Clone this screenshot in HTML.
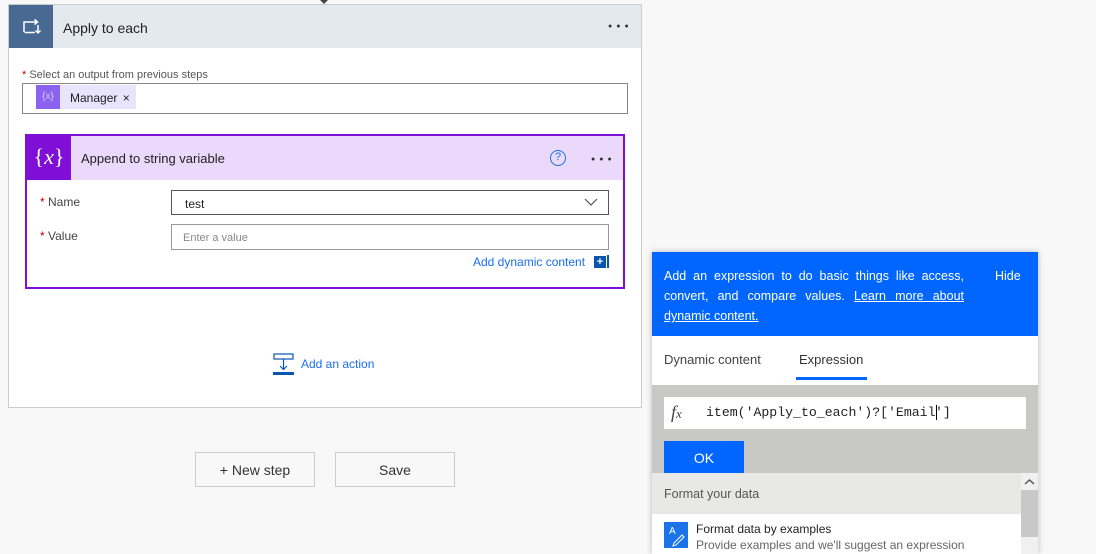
<!DOCTYPE html>
<html><head><meta charset="utf-8"><style>
*{box-sizing:border-box;margin:0;padding:0}
body{width:1096px;height:554px;overflow:hidden;background:#f8f8f8;font-family:"Liberation Sans",sans-serif;position:relative;color:#333}
.a{position:absolute}
.dots{font-size:7px;letter-spacing:4px;color:#333}
</style></head><body>
<div class="a" style="left:320px;top:0;width:8px;height:4px;background:#444;clip-path:polygon(0 0,100% 0,50% 100%)"></div>
<div class="a" style="left:8px;top:4px;width:634px;height:404px;background:#fff;border:1px solid #ccc"></div>
<div class="a" style="left:9px;top:5px;width:632px;height:43px;background:#e4e8ef"></div>
<div class="a" style="left:9px;top:5px;width:44px;height:43px;background:#486991">
<svg width="44" height="43" viewBox="0 0 44 43"><g fill="none" stroke="#fff" stroke-width="1.5"><path d="M15 27V17h13"/><path d="M25.5 14.5l3 2.5-3 2.5"/><path d="M15.5 27.5H26"/><path d="M29 20v8"/><path d="M26.5 25.5l2.5 2.5 2.5-2.5"/></g></svg></div>
<div class="a" style="left:63px;top:20px;font-size:14px;color:#222">Apply to each</div>
<div class="a dots" style="left:608px;top:23px">●●●</div>
<div class="a" style="left:22px;top:69px;font-size:11px;color:#555"><span style="color:#c00">*</span> Select an output from previous steps</div>
<div class="a" style="left:22px;top:83px;width:606px;height:31px;border:1px solid #888;background:#fff"></div>
<div class="a" style="left:36px;top:85px;width:100px;height:24px;background:#e8e4fc"></div>
<div class="a" style="left:36px;top:85px;width:24px;height:24px;background:#8b62f0;color:#d8ccff;font-size:10px;text-align:center;line-height:24px">{x}</div>
<div class="a" style="left:70px;top:91px;font-size:12px;color:#222">Manager <span style="margin-left:2px">×</span></div>
<div class="a" style="left:25px;top:134px;width:600px;height:155px;border:2px solid #7f0fd6;background:#fff"></div>
<div class="a" style="left:27px;top:136px;width:596px;height:44px;background:#ead9fa"></div>
<div class="a" style="left:27px;top:136px;width:44px;height:44px;background:#7f0fd6;color:#fff;font-size:22px;text-align:center;line-height:42px;font-family:'Liberation Serif',serif">{<i>x</i>}</div>
<div class="a" style="left:81px;top:151px;font-size:13px;color:#222">Append to string variable</div>
<div class="a" style="left:550px;top:150px;width:16px;height:16px;border:1.5px solid #1a73e8;border-radius:50%;color:#1a73e8;font-size:11px;text-align:center;line-height:13px">?</div>
<div class="a dots" style="left:591px;top:156px">●●●</div>
<div class="a" style="left:40px;top:195px;font-size:12px;color:#444"><span style="color:#c00">*</span> Name</div>
<div class="a" style="left:40px;top:229px;font-size:12px;color:#444"><span style="color:#c00">*</span> Value</div>
<div class="a" style="left:171px;top:190px;width:438px;height:25px;border:1px solid #555;background:#fff;font-size:12px;padding:6px 0 0 13px;color:#222">test</div>
<svg class="a" style="left:584px;top:197px" width="14" height="10"><path d="M1 2l6 6 6-6" fill="none" stroke="#555" stroke-width="1.2"/></svg>
<div class="a" style="left:171px;top:224px;width:438px;height:26px;border:1px solid #999;background:#fff;font-size:11px;padding:7px 0 0 11px;color:#888">Enter a value</div>
<div class="a" style="left:473px;top:255px;font-size:12px;color:#1a6ef0">Add dynamic content</div>
<div class="a" style="left:594px;top:256px;width:12px;height:12px;background:#0a55b0;color:#fff;font-size:11px;line-height:12px;text-align:center;font-weight:bold">+</div>
<div class="a" style="left:607px;top:255px;width:2px;height:13px;background:#0a55b0"></div>
<svg class="a" style="left:273px;top:353px" width="22" height="22"><rect x="1" y="1" width="19" height="5" fill="none" stroke="#0a55b0" stroke-width="1.2"/><path d="M10.5 6v10M7 13l3.5 3.5L14 13" fill="none" stroke="#0a55b0" stroke-width="1.2"/><rect x="0" y="19" width="21" height="3" fill="#0a55b0"/></svg>
<div class="a" style="left:301px;top:357px;font-size:12px;color:#1a6ef0">Add an action</div>
<div class="a" style="left:195px;top:452px;width:120px;height:35px;border:1px solid #ccc;background:#f8f8f8;font-size:14px;text-align:center;line-height:35px;color:#333">+ New step</div>
<div class="a" style="left:335px;top:452px;width:120px;height:35px;border:1px solid #ccc;background:#f8f8f8;font-size:14px;text-align:center;line-height:35px;color:#333">Save</div>
<div class="a" style="left:652px;top:252px;width:386px;height:302px;background:#fff;box-shadow:0 0 6px rgba(0,0,0,.25)"></div>
<div class="a" style="left:652px;top:252px;width:386px;height:84px;background:#0066ff"></div>
<div class="a" style="left:664px;top:266px;width:300px;font-size:12.5px;color:#fff;line-height:20px;text-align:justify">Add an expression to do basic things like access, convert, and compare values. <u>Learn more about dynamic content.</u></div>
<div class="a" style="left:995px;top:269px;font-size:12.5px;color:#fff">Hide</div>
<div class="a" style="left:664px;top:352px;font-size:13px;color:#444">Dynamic content</div>
<div class="a" style="left:799px;top:352px;font-size:13px;color:#333">Expression</div>
<div class="a" style="left:796px;top:377px;width:71px;height:3px;background:#0066ff"></div>
<div class="a" style="left:652px;top:385px;width:386px;height:88px;background:#c8c9c7"></div>
<div class="a" style="left:664px;top:397px;width:362px;height:32px;background:#fff"></div>
<div class="a" style="left:671px;top:402px;font-family:'Liberation Serif',serif;font-style:italic;font-size:18px;color:#444">f<span style="font-size:13px">x</span></div>
<div class="a" style="left:706px;top:405px;font-family:'Liberation Mono',monospace;font-size:13.2px;color:#222;white-space:pre">item('Apply_to_each')?['Email<span style="border-left:1.5px solid #000;margin-right:-1.5px"></span>']</div>
<div class="a" style="left:664px;top:441px;width:80px;height:32px;background:#0066ff;color:#fff;font-size:14px;text-align:center;line-height:34px">OK</div>
<div class="a" style="left:652px;top:473px;width:369px;height:41px;background:#e8e9e7"></div>
<div class="a" style="left:664px;top:487px;font-size:12.5px;color:#555">Format your data</div>
<div class="a" style="left:1021px;top:473px;width:17px;height:81px;background:#f0f0f0"></div>
<div class="a" style="left:1021px;top:490px;width:17px;height:47px;background:#c8c8c8"></div>
<svg class="a" style="left:1024px;top:478px" width="11" height="8"><path d="M1 6l4.5-4 4.5 4" fill="none" stroke="#555" stroke-width="1.5"/></svg>
<div class="a" style="left:664px;top:522px;width:24px;height:26px;background:#1a73e8"></div>
<svg class="a" style="left:664px;top:522px" width="24" height="26"><text x="5" y="12" font-size="10" fill="#fff" font-family="Liberation Sans">A</text><path d="M10 21l8-8 2 2-8 8-3 1z" fill="none" stroke="#fff" stroke-width="1"/></svg>
<div class="a" style="left:696px;top:522px;font-size:12px;color:#222">Format data by examples</div>
<div class="a" style="left:696px;top:538px;font-size:12px;color:#666">Provide examples and we'll suggest an expression</div>
</body></html>
